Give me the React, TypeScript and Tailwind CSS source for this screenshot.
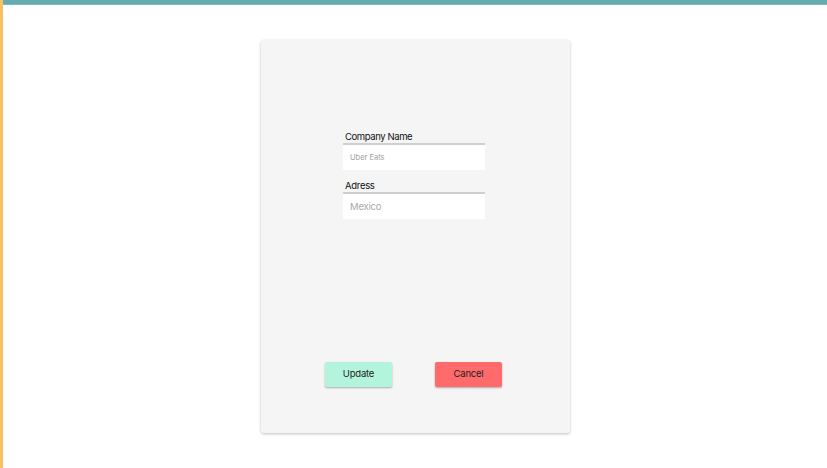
import React from "react";

export default function App() {
  return (
    <div className="w-full h-[468px] bg-white border-l-[3px] border-l-[#f7c25f] flex flex-col font-['Inter',sans-serif]">
      <div className="h-[5px] w-full bg-[#65acb0] border-b border-b-[#7dbabd]" />
      <div className="flex justify-center pt-[35px]">
        <div className="w-[309px] h-[393px] bg-[#f5f5f5] rounded-[3px] shadow-[0_1px_3px_rgba(0,0,0,0.25)] flex flex-col items-center">
          <div className="w-[142px] mt-[89px] flex flex-col ml-[-2px]">
            <label className="text-[9.5px] leading-[14px] pt-[1px] h-[14px] tracking-[-0.4px] text-[#111] pl-[2px]">Company Name</label>
            <div className="h-[27px] bg-white border-t-2 border-t-[#cfcfcf] flex items-center pt-[1px] px-[7px] text-[7.5px] text-[#a0a0a0]">Uber Eats</div>
            <label className="text-[9.5px] leading-[14px] pt-[1px] h-[14px] tracking-[-0.3px] text-[#111] mt-[8px] pl-[2px]">Adress</label>
            <div className="h-[27px] bg-white border-t-2 border-t-[#cfcfcf] flex items-center pt-[2px] px-[7px] text-[9.5px] tracking-[-0.2px] text-[#a8a8a8]">Mexico</div>
          </div>
          <div className="mt-[143px] flex gap-[43px] ml-[-3px]">
            <button className="w-[67px] h-[25px] rounded-[2px] bg-[#b2f5dc] text-[9.5px] tracking-[-0.2px] text-[#222] shadow-[0_1px_2px_rgba(0,0,0,0.3)]">Update</button>
            <button className="w-[67px] h-[25px] rounded-[2px] bg-[#ff6b6b] text-[9.5px] tracking-[-0.2px] text-[#222] shadow-[0_1px_2px_rgba(0,0,0,0.3)]">Cancel</button>
          </div>
        </div>
      </div>
    </div>
  );
}
